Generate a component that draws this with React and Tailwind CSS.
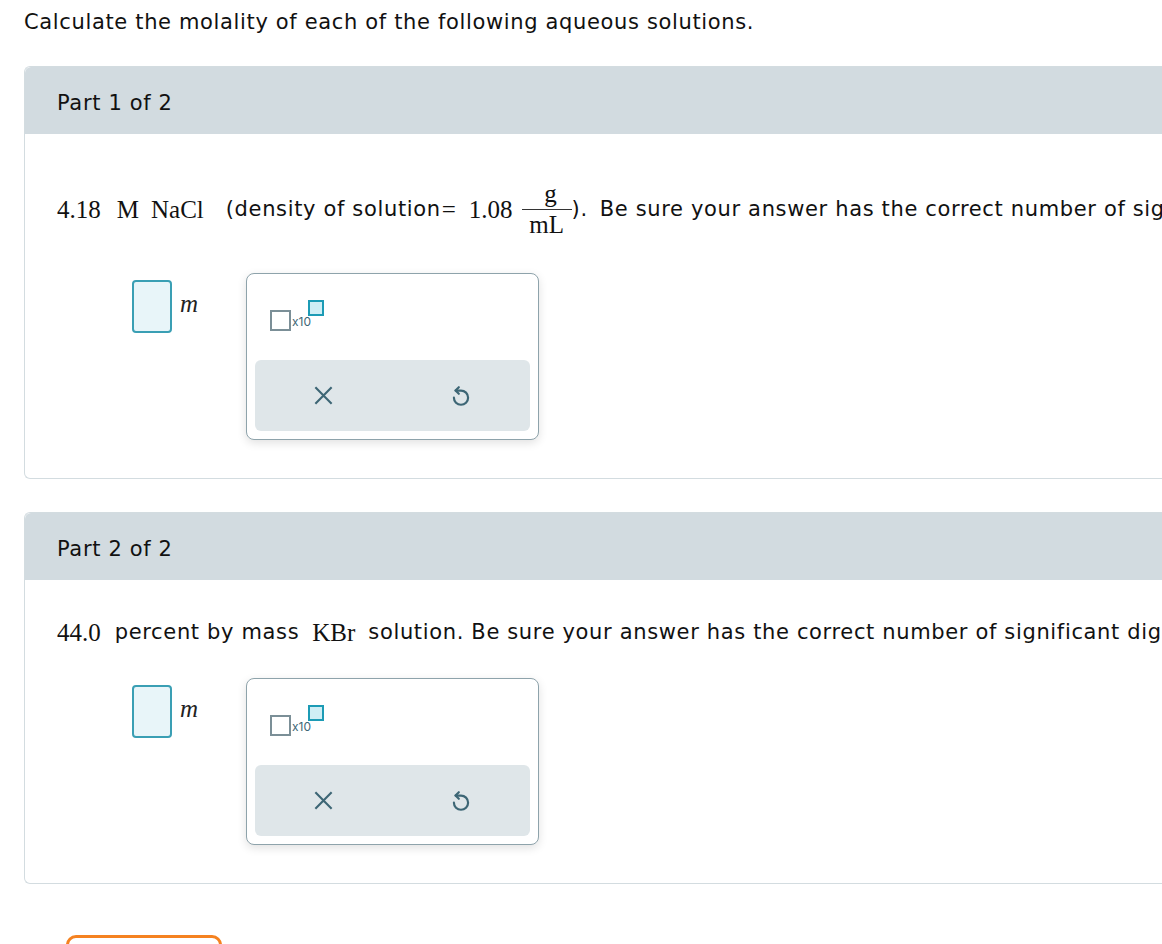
import React from 'react';

const sans = { fontFamily: '"DejaVu Sans", Verdana, sans-serif' };

const Serif = ({ children, className = '' }) => (
  <span className={`font-['Liberation_Serif',serif] text-[25px] tracking-normal ${className}`}>{children}</span>
);

const XIcon = () => (
  <svg width="19" height="19" viewBox="0 0 18 18" fill="none" stroke="#3d6675" strokeWidth="2" strokeLinecap="square">
    <path d="M2 2 L16 16 M16 2 L2 16" />
  </svg>
);

const UndoIcon = () => (
  <svg width="22" height="24" viewBox="0 0 20 22" fill="none" stroke="#3d6675" strokeWidth="2" strokeLinecap="round" strokeLinejoin="round">
    <path d="M8 3 L5 6 L8 9" />
    <path d="M5 6 H10 A6.5 6.5 0 1 1 3.5 12.5" />
  </svg>
);

const AnswerRow = () => (
  <div className="flex items-start pl-[107px]">
    <div className="mt-[7px] h-[53px] w-[40px] rounded-[4px] border-2 border-[#3a9fb4] bg-[#e8f5f9]" />
    <span className="ml-[8px] mt-[18px] w-[20px] font-['Liberation_Serif',serif] text-[25px] italic leading-none text-[#222]">m</span>
    <div className="ml-[46px] flex h-[167px] w-[293px] flex-col rounded-[8px] border-[1.5px] border-[#8ea3ab] bg-white shadow-[0_3px_10px_rgba(0,0,0,0.12)]">
      <div className="relative ml-[23px] mt-[24px] h-[36px] w-[60px]">
        <div className="absolute left-0 top-[12px] h-[21px] w-[21px] border-2 border-[#7b8f97]" />
        <span className="absolute left-[22px] top-[18px] font-['Inter',sans-serif] text-[12px] tracking-normal leading-none text-[#3d6675]">x10</span>
        <div className="absolute left-[38px] top-[2px] h-[16px] w-[16px] border-2 border-[#1c9bb5] bg-[#cfeef5]" />
      </div>
      <div className="mx-[8px] mb-[8px] mt-auto flex h-[71px] rounded-[6px] bg-[#dfe6e9]">
        <button className="flex flex-1 items-center justify-center"><XIcon /></button>
        <button className="flex flex-1 items-center justify-center"><UndoIcon /></button>
      </div>
    </div>
  </div>
);

const Card = ({ title, children }) => (
  <div className="w-[1200px] rounded-l-[6px] border border-r-0 border-[#d3dce0]">
    <div className="flex h-[67px] items-center rounded-tl-[6px] bg-[#d2dbe0] pl-[32px] pt-[7px] text-[#111]">
      {title}
    </div>
    {children}
  </div>
);

export default function App() {
  return (
    <div className="h-[944px] w-[1162px] overflow-hidden bg-white pl-[24px] pt-[8px] text-[21px] tracking-[0.65px] text-[#111]" style={sans}>
      <h1 className="leading-[28px]">Calculate the molality of each of the following aqueous solutions.</h1>

      <div className="mt-[30px]">
        <Card title="Part 1 of 2">
          <div className="flex h-[139px] items-center whitespace-nowrap pl-[32px] pt-[12px]">
            <Serif>4.18</Serif>
            <Serif className="ml-[16px]">M</Serif>
            <Serif className="ml-[12px]">NaCl</Serif>
            <span className="ml-[22px]">(density of solution</span>
            <Serif className="ml-[1px]">=</Serif>
            <Serif className="ml-[13px]">1.08</Serif>
            <span className="ml-[9px] inline-flex flex-col items-center font-['Liberation_Serif',serif] text-[25px] tracking-normal leading-[24px]">
              <span className="pl-[8px]">g</span>
              <span className="my-[3px] h-[1.5px] w-[50px] bg-[#333]" />
              <span>mL</span>
            </span>
            <span>).</span>
            <span className="ml-[12px]">Be sure your answer has the correct number of significant digits.</span>
          </div>
          <AnswerRow />
          <div className="h-[38px]" />
        </Card>
      </div>

      <div className="mt-[33px]">
        <Card title="Part 2 of 2">
          <div className="flex h-[98px] items-center whitespace-nowrap pl-[32px] pt-[8px]">
            <Serif>44.0</Serif>
            <span className="ml-[14px]">percent by mass</span>
            <Serif className="ml-[13px]">KBr</Serif>
            <span className="ml-[13px]">solution. Be sure your answer has the correct number of significant digits.</span>
          </div>
          <AnswerRow />
          <div className="h-[38px]" />
        </Card>
      </div>

      <button className="ml-[42px] mt-[51px] h-[44px] w-[156px] rounded-[10px] border-[3px] border-[#f58220] bg-white" />
    </div>
  );
}
